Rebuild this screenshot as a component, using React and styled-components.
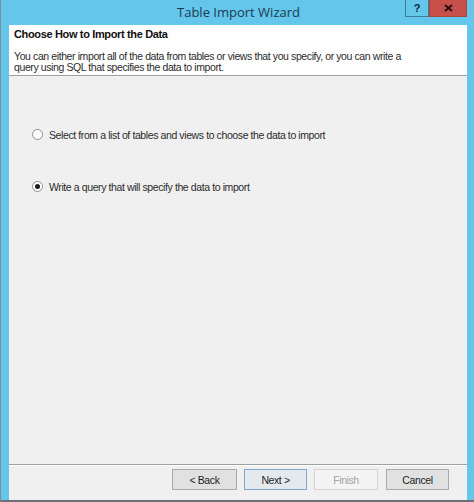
import React from "react";
import styled, { createGlobalStyle } from "styled-components";

const Global = createGlobalStyle`
  html, body { margin: 0; padding: 0; background: #6a6a6a; }
  body { font-family: Tahoma, "Liberation Sans", "DejaVu Sans", sans-serif; }
`;

const Frame = styled.div`
  width: 474px;
  height: 502px;
  box-sizing: border-box;
  background: #63c6ea;
  border-left: 1px solid #7c8d96;
  border-bottom: 2px solid #6d6f72;
  display: flex;
  flex-direction: column;
`;

const TitleBar = styled.div`
  position: relative;
  height: 25px;
  flex: none;
  display: flex;
  align-items: center;
  justify-content: center;
`;

const Title = styled.div`
  font-family: "Open Sans", "Noto Sans", sans-serif;
  font-size: 13px;
  color: #1c3a52;
  padding-left: 2px;
  margin-top: -1px;
`;

const Caption = styled.div`
  position: absolute;
  top: 0;
  right: 7px;
  display: flex;
`;

const CapButton = styled.div`
  height: 17px;
  box-sizing: border-box;
  width: ${(p) => p.$w}px;
  display: flex;
  align-items: center;
  justify-content: center;
  font-family: "Liberation Sans", Arial, sans-serif;
  font-weight: bold;
  font-size: 11px;
  color: ${(p) => (p.$close ? "#2a1414" : "#13273a")};
  background: ${(p) => (p.$close ? "#c7504a" : "#63c6ea")};
  border: 1px solid ${(p) => (p.$close ? "#a8463f" : "#3d7d99")};
  border-top: none;
`;

const Client = styled.div`
  flex: 1;
  margin: 0 7px 0 8px;
  background: #f0f0f0;
  display: flex;
  flex-direction: column;
  font-family: "Liberation Sans", Arial, sans-serif;
  font-size: 10.5px;
  letter-spacing: -0.4px;
  color: #222;
`;

const Header = styled.div`
  height: 51px;
  box-sizing: border-box;
  background: #ffffff;
  border-bottom: 1px solid #a0a0a0;
  padding: 3px 5px 0 5px;
`;

const HeaderTitle = styled.div`
  font-weight: bold;
  font-size: 11px;
  color: #111;
  line-height: 13px;
  letter-spacing: -0.35px;
`;

const HeaderText = styled.div`
  margin-top: 10px;
  line-height: 11px;
  color: #2b2b2b;
  white-space: nowrap;
`;

const Body = styled.div`
  flex: 1;
  display: flex;
  flex-direction: column;
  padding: 52px 0 0 23px;
  gap: 39px;
`;

const Option = styled.label`
  display: flex;
  align-items: center;
  gap: 6px;
  height: 13px;
  color: #2b2b2b;
`;

const Radio = styled.span`
  width: 11px;
  height: 11px;
  box-sizing: border-box;
  border-radius: 50%;
  border: 1px solid #8f8f8f;
  background: #ffffff;
  display: flex;
  align-items: center;
  justify-content: center;
  &::after {
    content: "";
    display: ${(p) => (p.$checked ? "block" : "none")};
    width: 5px;
    height: 5px;
    border-radius: 50%;
    background: #1a1a1a;
  }
`;

const Footer = styled.div`
  height: 36px;
  flex: none;
  box-sizing: border-box;
  border-top: 1px solid #a0a0a0;
  display: flex;
  justify-content: flex-end;
  align-items: flex-start;
  padding: 4px 18px 0 0;
  gap: 7px;
  box-shadow: inset 0 1px 0 #ffffff;
`;

const Button = styled.div`
  width: ${(p) => p.$w || 64}px;
  height: 21px;
  box-sizing: border-box;
  display: flex;
  align-items: center;
  justify-content: center;
  font-family: "Liberation Sans", Arial, sans-serif;
  font-size: 10.5px;
  letter-spacing: -0.4px;
  color: ${(p) => (p.$disabled ? "#a3a3a3" : "#1e1e1e")};
  background: ${(p) =>
    p.$disabled ? "#f4f4f4" : p.$default ? "#e4e9ee" : "#e1e1e1"};
  border: 1px solid
    ${(p) => (p.$disabled ? "#d3d3d3" : p.$default ? "#7fa7cf" : "#a9a9a9")};
`;

export default function App() {
  return (
    <>
      <Global />
      <Frame>
        <TitleBar>
          <Title>Table Import Wizard</Title>
          <Caption>
            <CapButton $w={24}>?</CapButton>
            <CapButton $w={38} $close>
              <svg width="9" height="8" viewBox="0 0 9 8">
                <path d="M1 1 L8 7 M8 1 L1 7" stroke="#2a1212" strokeWidth="2" />
              </svg>
            </CapButton>
          </Caption>
        </TitleBar>
        <Client>
          <Header>
            <HeaderTitle>Choose How to Import the Data</HeaderTitle>
            <HeaderText>
              You can either import all of the data from tables or views that you specify, or you can write a
              <br />
              query using SQL that specifies the data to import.
            </HeaderText>
          </Header>
          <Body>
            <Option>
              <Radio />
              Select from a list of tables and views to choose the data to import
            </Option>
            <Option>
              <Radio $checked />
              Write a query that will specify the data to import
            </Option>
          </Body>
          <Footer>
            <Button $w={65}>&lt; Back</Button>
            <Button $w={63} $default>Next &gt;</Button>
            <Button $w={64} $disabled>Finish</Button>
            <Button $w={63} style={{ marginLeft: 1 }}>Cancel</Button>
          </Footer>
        </Client>
      </Frame>
    </>
  );
}
